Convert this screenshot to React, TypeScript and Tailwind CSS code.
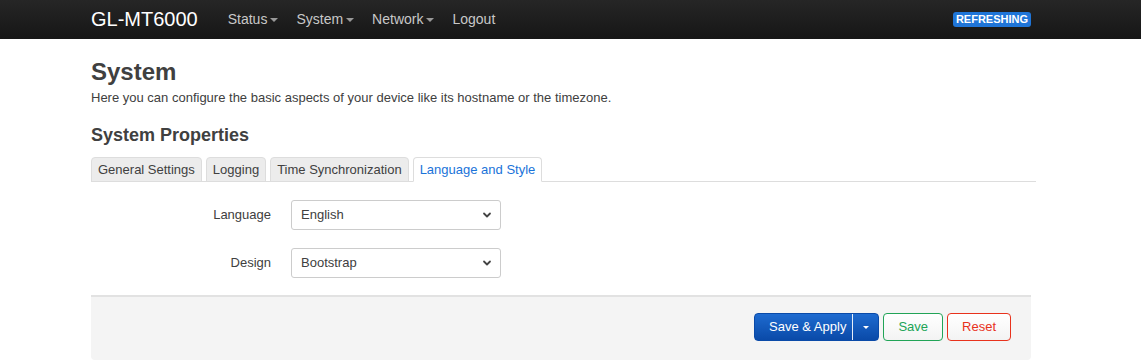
import React from 'react'

const menu = [
  { label: 'Status', caret: true },
  { label: 'System', caret: true },
  { label: 'Network', caret: true },
  { label: 'Logout', caret: false },
]

const tabs = ['General Settings', 'Logging', 'Time Synchronization', 'Language and Style']

function Chevron() {
  return (
    <svg className="w-[10px] h-[10px] text-[#444]" viewBox="0 0 10 10" fill="none" stroke="currentColor">
      <path d="M2 3.5l3 3 3-3" strokeWidth={1.8} strokeLinecap="round" strokeLinejoin="round" />
    </svg>
  )
}

function SelectRow({ label, value }: { label: string; value: string }) {
  return (
    <div className="flex items-center h-[30px]">
      <div className="w-[200px] text-right pr-[20px] text-[13px] text-[#404040]">{label}</div>
      <div className="w-[210px] h-[30px] border border-[#ccc] rounded-[3px] bg-white flex items-center justify-between pl-[9px] pr-[8px] text-[13px] text-[#404040]">
        <span>{value}</span>
        <Chevron />
      </div>
    </div>
  )
}

export default function App() {
  return (
    <div className="w-[1141px] h-[362px] bg-white overflow-hidden" style={{ fontFamily: '"Liberation Sans", Arial, sans-serif' }}>
      {/* top bar */}
      <div className="h-[39px] bg-gradient-to-b from-[#262626] to-[#161616]">
        <div className="ml-[91px] w-[940px] h-full flex items-center">
          <div className="text-[20px] text-white mr-[21px] leading-none -mt-[1px]">GL-MT6000</div>
          <div className="flex items-center -mt-[1px]">
            {menu.map((m) => (
              <div key={m.label} className="px-[9px] flex items-center text-[14px] text-[#c8c8c8]">
                {m.label}
                {m.caret && (
                  <span className="ml-[3px] mt-[1px] w-0 h-0 border-l-[4px] border-r-[4px] border-t-[4px] border-l-transparent border-r-transparent border-t-[#999]" />
                )}
              </div>
            ))}
          </div>
          <div className="ml-auto bg-[#1f75d8] rounded-[3px] px-[3px] h-[15px] flex items-center text-[11px] font-bold text-white leading-none">
            REFRESHING
          </div>
        </div>
      </div>

      {/* content */}
      <div className="ml-[91px] w-[940px]">
        <h2 className="text-[24px] font-bold text-[#404040] leading-[28px] mt-[19px] mb-0">System</h2>
        <div className="text-[13px] text-[#404040] leading-[18px] mt-[3px]">
          Here you can configure the basic aspects of your device like its hostname or the timezone.
        </div>
        <h3 className="text-[18px] font-bold text-[#404040] leading-[22px] mt-[17px]">System Properties</h3>

        {/* tabs */}
        <div className="flex items-end mt-[11px] border-b border-[#ddd] w-[945px] h-[25px]">
          {tabs.map((t, i) => {
            const active = i === tabs.length - 1
            return (
              <div
                key={t}
                className={`h-[25px] px-[6px] mr-[4px] -mb-px flex items-center text-[13px] rounded-t-[4px] border ${
                  active
                    ? 'bg-white border-[#ddd] border-b-white text-[#1a73d9]'
                    : 'bg-[#ececec] border-[#ddd] text-[#404040]'
                }`}
              >
                {t}
              </div>
            )
          })}
        </div>

        {/* form */}
        <div className="flex flex-col gap-[18px] mt-[18px]">
          <SelectRow label="Language" value="English" />
          <SelectRow label="Design" value="Bootstrap" />
        </div>

        {/* actions */}
        <div className="mt-[17px] h-[65px] bg-[#f4f4f4] border-t-2 border-[#e2e2e2] rounded-b-[4px] flex items-start justify-end pr-[20px] gap-[4px] pt-[16px]">
          <div className="flex h-[28px] rounded-[4px] bg-gradient-to-b from-[#1e6bd0] to-[#0a4aa8] border border-[#0a4aa8] text-white text-[13px]">
            <div className="pl-[14px] pr-[6px] flex items-center border-r border-white/90">Save &amp; Apply</div>
            <div className="w-[25px] flex items-center justify-center">
              <span className="w-0 h-0 border-l-[3px] border-r-[3px] border-t-[3px] border-l-transparent border-r-transparent border-t-white" />
            </div>
          </div>
          <div className="h-[28px] px-[14px] flex items-center rounded-[4px] border border-[#21a457] text-[#21a457] text-[13px] bg-gradient-to-b from-white to-[#f3f3f3]">
            Save
          </div>
          <div className="h-[28px] px-[14px] flex items-center rounded-[4px] border border-[#e8321c] text-[#e8321c] text-[13px] bg-gradient-to-b from-white to-[#f3f3f3]">
            Reset
          </div>
        </div>
      </div>
    </div>
  )
}
